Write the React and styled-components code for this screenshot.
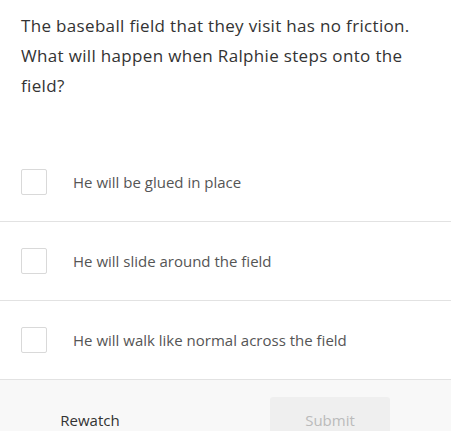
import React from 'react';
import styled, { createGlobalStyle } from 'styled-components';

const GlobalStyle = createGlobalStyle`
  body {
    margin: 0;
    background: #fff;
    font-family: "Open Sans", "Liberation Sans", sans-serif;
  }
`;

const OPTIONS = [
  'He will be glued in place',
  'He will slide around the field',
  'He will walk like normal across the field'
];

const App = () => {
  return (
    <Wrapper>
      <GlobalStyle />
      <Question>
        The baseball field that they visit has no friction. What will happen when Ralphie steps onto the
        field?
      </Question>
      <Options>
        {OPTIONS.map((option) => (
          <Option key={option}>
            <Checkbox />
            <OptionLabel>{option}</OptionLabel>
          </Option>
        ))}
      </Options>
      <Footer>
        <GhostButton>Rewatch</GhostButton>
        <SubmitButton disabled>Submit</SubmitButton>
      </Footer>
    </Wrapper>
  );
};

const Wrapper = styled.main`
  width: 451px;
  display: flex;
  flex-direction: column;
`;

const Question = styled.p`
  margin: 0;
  padding: 11px 20px 42px 21px;
  font-size: 17px;
  letter-spacing: 0.33px;
  line-height: 30px;
  color: #333;
`;

const Options = styled.ul`
  list-style: none;
  margin: 0;
  padding: 0;
`;

const Option = styled.li`
  height: 78px;
  padding: 0 21px;
  border-bottom: 1px solid #e2e2e2;

  display: flex;
  align-items: center;
  gap: 26px;
`;

const Checkbox = styled.span`
  width: 26px;
  height: 26px;
  box-sizing: border-box;
  border: 1px solid #d9d9d9;
  border-radius: 2px;
  flex-shrink: 0;
`;

const OptionLabel = styled.span`
  font-size: 15px;
  color: #555;
`;

const Footer = styled.footer`
  background: #f8f8f8;
  padding: 17px 0 0 30px;
  height: 51px;
  display: flex;
  gap: 120px;
  overflow: hidden;
`;

const Button = styled.button`
  width: 120px;
  height: 46px;
  flex-shrink: 0;
  border: none;
  border-radius: 3px;
  font-family: inherit;
  font-size: 15px;
`;

const GhostButton = styled(Button)`
  background: transparent;
  color: #333;
`;

const SubmitButton = styled(Button)`
  background: #efefef;
  color: #bbb;
`;

export default App;
